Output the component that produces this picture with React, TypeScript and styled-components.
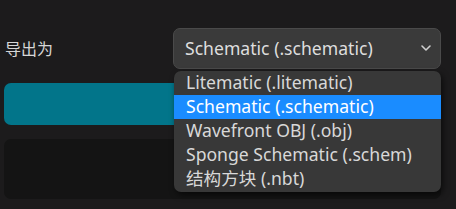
import React, { useState } from "react";
import styled, { createGlobalStyle } from "styled-components";

const GlobalStyle = createGlobalStyle`
  html, body {
    margin: 0;
    padding: 0;
    background: #1c1b1c;
    font-family: "Noto Sans", "Noto Sans CJK SC", sans-serif;
    color: #dcdcdc;
  }
  * { box-sizing: border-box; }
`;

const Panel = styled.main`
  width: 456px;
  height: 209px;
  padding: 28px 15px 0 4px;
  display: flex;
  flex-direction: column;
  gap: 14px;
`;

const Row = styled.div`
  display: grid;
  grid-template-columns: 169px 1fr;
  align-items: center;
`;

const Label = styled.label`
  font-size: 16px;
  padding-left: 1px;
  padding-bottom: 2px;
  color: #d6d6d6;
`;

const SelectWrap = styled.div`
  position: relative;
`;

const SelectBox = styled.div`
  height: 41px;
  border: 1px solid #4a4a4a;
  border-radius: 7px;
  background: #3a3a3a;
  display: flex;
  align-items: center;
  justify-content: space-between;
  padding: 0 8px 2px 11px;
  font-size: 17.6px;
  color: #dedede;
`;

const Menu = styled.ul`
  position: absolute;
  top: 43px;
  left: 1px;
  right: 0;
  margin: 0;
  padding: 0 0 1px;
  list-style: none;
  background: #383838;
  border-radius: 7px;
  box-shadow: 2px 3px 6px rgba(0, 0, 0, 0.6);
  overflow: hidden;
  z-index: 2;
`;

const Item = styled.li<{ $active?: boolean }>`
  height: 24px;
  line-height: 22px;
  padding-left: 12px;
  font-size: 17.6px;
  color: ${({ $active }) => ($active ? "#ffffff" : "#d8d8d8")};
  background: ${({ $active }) => ($active ? "#1a8cff" : "transparent")};
`;

const Button = styled.button`
  height: 42px;
  border: none;
  border-radius: 7px;
  background: #02758a;
`;

const Output = styled.div`
  height: 60px;
  border-radius: 7px;
  background: #141414;
`;

const options = [
  "Litematic (.litematic)",
  "Schematic (.schematic)",
  "Wavefront OBJ (.obj)",
  "Sponge Schematic (.schem)",
  "结构方块 (.nbt)",
];

const Chevron = () => (
  <svg width="12" height="8" viewBox="0 0 12 8" fill="none">
    <path d="M2 2l4 4 4-4" stroke="#cfcfcf" strokeWidth="1.6" strokeLinecap="round" strokeLinejoin="round" />
  </svg>
);

export default function App() {
  const [selected] = useState(1);
  return (
    <>
      <GlobalStyle />
      <Panel>
        <Row>
          <Label>导出为</Label>
          <SelectWrap>
            <SelectBox>
              <span>{options[selected]}</span>
              <Chevron />
            </SelectBox>
            <Menu>
              {options.map((o, i) => (
                <Item key={o} $active={i === selected}>
                  {o}
                </Item>
              ))}
            </Menu>
          </SelectWrap>
        </Row>
        <Button />
        <Output />
      </Panel>
    </>
  );
}
